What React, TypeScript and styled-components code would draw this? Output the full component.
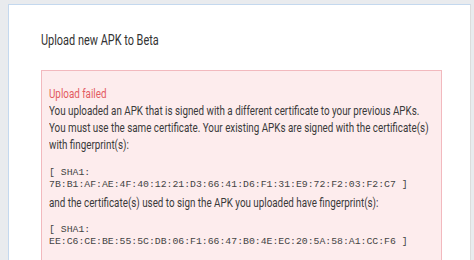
import React from "react";
import styled, { createGlobalStyle } from "styled-components";

const Global = createGlobalStyle`
  html, body { margin: 0; padding: 0; }
  body {
    background: #e9ebee;
    width: 474px;
    height: 260px;
    overflow: hidden;
    font-family: Roboto, "Liberation Sans", Arial, sans-serif;
  }
`;

const Page = styled.div`
  display: flex;
  padding: 4px 3px 0 8px;
  height: 260px;
  box-sizing: border-box;
`;

const Dialog = styled.div`
  flex: 1;
  background: #ffffff;
  border-top: 1px solid #c4d8ee;
  border-left: 1px solid #c4d8ee;
  border-right: 1px solid #dcdcdc;
  padding: 24px 28px 0 32px;
  display: flex;
  flex-direction: column;
  gap: 19px;
  overflow: hidden;
`;

/* The reference text is narrower than the installed fonts: each line is
   drawn on one row and condensed horizontally. */
const Line = styled.span<{ $squeeze?: number }>`
  display: block;
  white-space: nowrap;
  transform: scaleX(${(p) => p.$squeeze ?? 0.78});
  transform-origin: 0 50%;
`;

const Title = styled.h1`
  margin: 0;
  font-size: 14px;
  font-weight: 400;
  color: #333333;
  line-height: 22px;
`;

const ErrorBox = styled.div`
  flex-shrink: 0;
  background: #fdeced;
  border: 1px solid #f2b9be;
  padding: 14px 7px 30px 7px;
  display: flex;
  flex-direction: column;
  color: #3a3a3a;
  font-size: 12.6px;
  line-height: 17px;
`;

const ErrorTitle = styled.div`
  color: #e35b61;
`;

const Para = styled.p<{ $space?: number }>`
  margin: ${(p) => p.$space ?? 0}px 0 0;
`;

const Mono = styled.p<{ $space: number }>`
  margin: ${(p) => p.$space}px 0 0;
  font-family: "Liberation Mono", "Courier New", monospace;
  font-size: 9.8px;
  line-height: 12px;
  color: #444444;
`;

export default function App() {
  return (
    <>
      <Global />
      <Page>
        <Dialog>
          <Title>
            <Line>Upload new APK to Beta</Line>
          </Title>
          <ErrorBox>
            <ErrorTitle>
              <Line>Upload failed</Line>
            </ErrorTitle>
            <Para>
              <Line>You uploaded an APK that is signed with a different certificate to your previous APKs.</Line>
              <Line>You must use the same certificate. Your existing APKs are signed with the certificate(s)</Line>
              <Line>with fingerprint(s):</Line>
            </Para>
            <Mono $space={14}>
              <Line $squeeze={1}>[ SHA1:</Line>
              <Line $squeeze={1}>7B:B1:AF:AE:4F:40:12:21:D3:66:41:D6:F1:31:E9:72:F2:03:F2:C7 ]</Line>
            </Mono>
            <Para $space={3}>
              <Line>and the certificate(s) used to sign the APK you uploaded have fingerprint(s):</Line>
            </Para>
            <Mono $space={13}>
              <Line $squeeze={1}>[ SHA1:</Line>
              <Line $squeeze={1}>EE:C6:CE:BE:55:5C:DB:06:F1:66:47:B0:4E:EC:20:5A:58:A1:CC:F6 ]</Line>
            </Mono>
          </ErrorBox>
        </Dialog>
      </Page>
    </>
  );
}
